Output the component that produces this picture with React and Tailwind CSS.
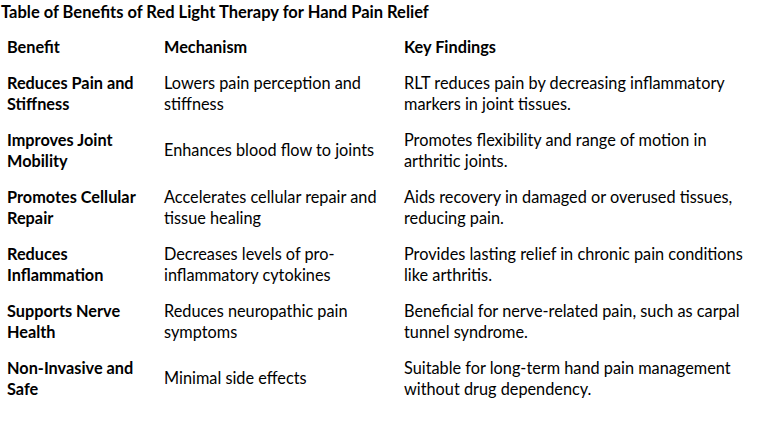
const rows = [
  ['Reduces Pain and Stiffness', 'Lowers pain perception and stiffness', 'RLT reduces pain by decreasing inflammatory markers in joint tissues.'],
  ['Improves Joint Mobility', 'Enhances blood flow to joints', 'Promotes flexibility and range of motion in arthritic joints.'],
  ['Promotes Cellular Repair', 'Accelerates cellular repair and tissue healing', 'Aids recovery in damaged or overused tissues, reducing pain.'],
  ['Reduces Inflammation', 'Decreases levels of pro-inflammatory cytokines', 'Provides lasting relief in chronic pain conditions like arthritis.'],
  ['Supports Nerve Health', 'Reduces neuropathic pain symptoms', 'Beneficial for nerve-related pain, such as carpal tunnel syndrome.'],
  ['Non-Invasive and Safe', 'Minimal side effects', 'Suitable for long-term hand pain management without drug dependency.'],
];

export default function App() {
  return (
    <div className="w-[763px] h-[438px] bg-white text-black font-['Lato',sans-serif] overflow-hidden">
      <h1 className="pl-[1px] text-[16.5px] font-bold leading-[24px] whitespace-nowrap">
        Table of Benefits of Red Light Therapy for Hand Pain Relief
      </h1>
      <div className="pl-[7px] mt-[5px] text-[16.3px] leading-[21px]">
        <div className="grid grid-cols-[157px_240px_356px] h-[35px] items-center font-bold">
          <div>Benefit</div>
          <div>Mechanism</div>
          <div>Key Findings</div>
        </div>
        {rows.map((r) => (
          <div key={r[0]} className="grid grid-cols-[157px_240px_356px] h-[57px] items-center">
            <div className="font-bold pr-4">{r[0]}</div>
            <div className="pr-3">{r[1]}</div>
            <div className="pr-2">{r[2]}</div>
          </div>
        ))}
      </div>
    </div>
  );
}
